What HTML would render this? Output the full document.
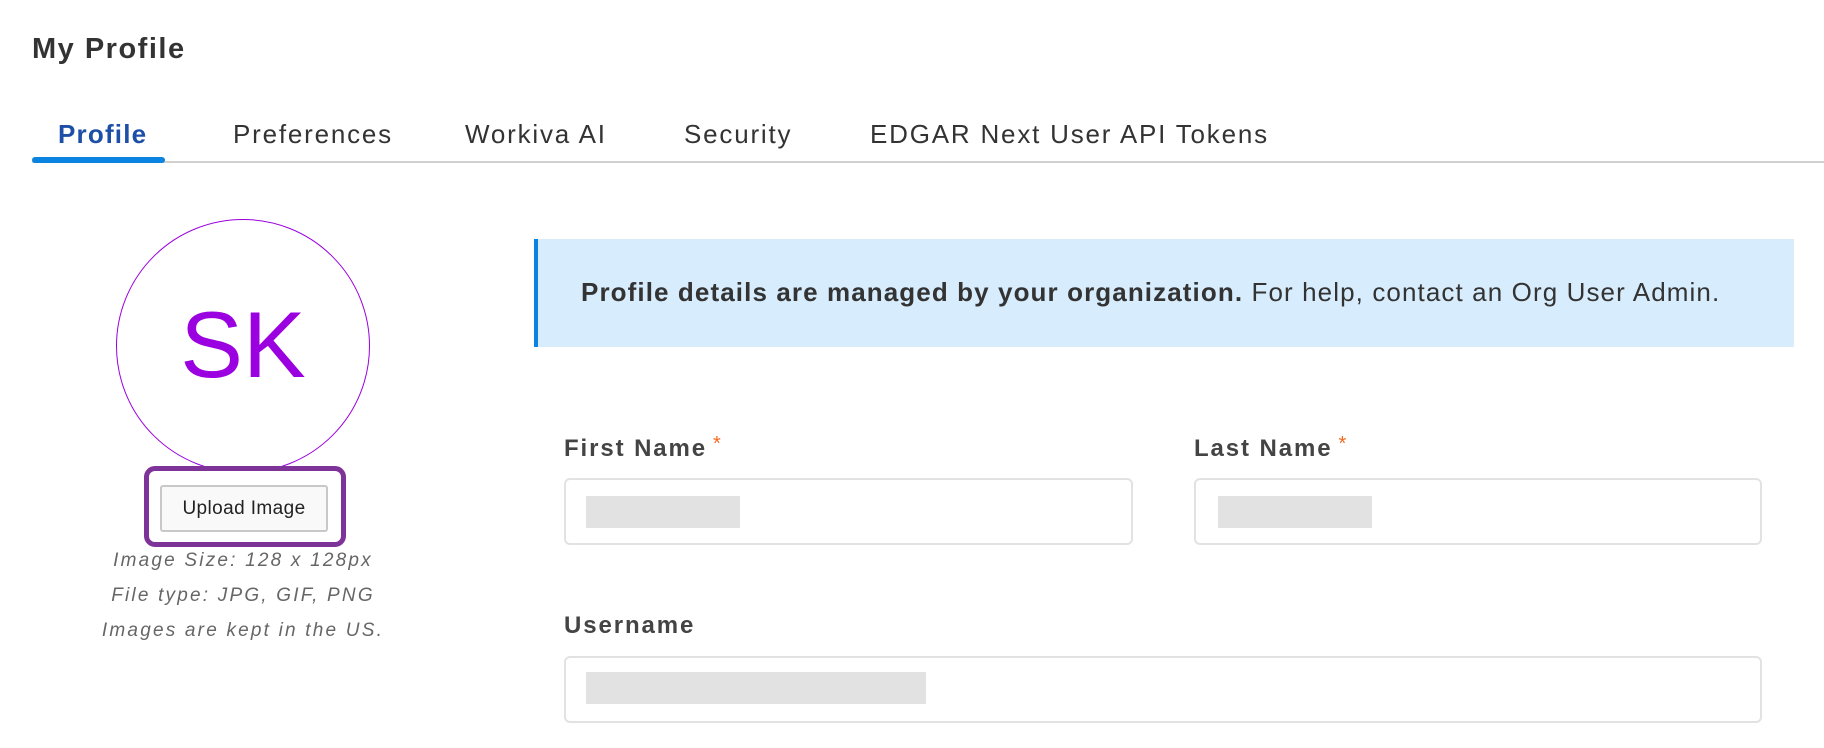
<!DOCTYPE html>
<html><head><style>
body{margin:0;width:1824px;height:748px;background:#fff;font-family:"Liberation Sans",sans-serif;position:relative;overflow:hidden;color:#333}
.a{position:absolute;white-space:nowrap}
.tab{position:absolute;top:119px;font-size:26px;color:#333;letter-spacing:1.8px}
.lab{position:absolute;font-size:24px;font-weight:bold;color:#444;letter-spacing:1.9px}
.lab span{color:#f26a21;font-weight:normal;font-size:20px;vertical-align:6px;margin-left:6px}
.inp{position:absolute;border:2px solid #e2e2e2;border-radius:6px;box-sizing:border-box;background:#fff}
.ph{position:absolute;background:#e2e2e2}
.cap{position:absolute;left:60px;width:366px;text-align:center;font-style:italic;font-size:19px;color:#666;letter-spacing:2.2px}
</style></head><body>
<div class="a" style="left:32px;top:33px;font-size:29px;font-weight:bold;color:#333;letter-spacing:1.5px">My Profile</div>
<div class="tab" style="left:58px;color:#1e4fa8;font-weight:bold;letter-spacing:1.2px">Profile</div>
<div class="tab" style="left:233px">Preferences</div>
<div class="tab" style="left:465px">Workiva AI</div>
<div class="tab" style="left:684px">Security</div>
<div class="tab" style="left:870px">EDGAR Next User API Tokens</div>
<div class="a" style="left:32px;top:161px;width:1792px;height:2px;background:#d0d0d0"></div>
<div class="a" style="left:32px;top:157px;width:133px;height:6px;background:#0a84e0;border-radius:3px"></div>

<div class="a" style="left:116px;top:219px;width:254px;height:254px;border:1.5px solid #9b00e0;border-radius:50%;box-sizing:border-box"></div>
<div class="a" style="left:116px;top:290px;width:254px;text-align:center;font-size:94px;color:#9b00e0;line-height:110px">SK</div>
<div class="a" style="left:144px;top:466px;width:202px;height:81px;border:5px solid #7e3399;border-radius:11px;box-sizing:border-box;background:#fff"></div>
<div class="a" style="left:160px;top:485px;width:168px;height:47px;border:2px solid #c8c8c8;border-radius:3px;box-sizing:border-box;background:#f9f9f9;text-align:center;line-height:43px;font-size:19px;color:#222;letter-spacing:0.4px">Upload Image</div>
<div class="cap" style="top:550px">Image Size: 128 x 128px</div>
<div class="cap" style="top:585px">File type: JPG, GIF, PNG</div>
<div class="cap" style="top:620px">Images are kept in the US.</div>

<div class="a" style="left:534px;top:239px;width:1260px;height:108px;background:#d7ecfc;border-left:4px solid #0a84e0;box-sizing:border-box"></div>
<div class="a" style="left:581px;top:277px;font-size:26px;color:#333;letter-spacing:1.1px"><b>Profile details are managed by your organization.</b> For help, contact an Org User Admin.</div>

<div class="lab" style="left:564px;top:433px">First Name<span>*</span></div>
<div class="inp" style="left:564px;top:478px;width:569px;height:67px"></div>
<div class="ph" style="left:586px;top:496px;width:154px;height:32px"></div>
<div class="lab" style="left:1194px;top:433px">Last Name<span>*</span></div>
<div class="inp" style="left:1194px;top:478px;width:568px;height:67px"></div>
<div class="ph" style="left:1218px;top:496px;width:154px;height:32px"></div>

<div class="lab" style="left:564px;top:612px">Username</div>
<div class="inp" style="left:564px;top:656px;width:1198px;height:67px"></div>
<div class="ph" style="left:586px;top:672px;width:340px;height:32px"></div>
</body></html>
